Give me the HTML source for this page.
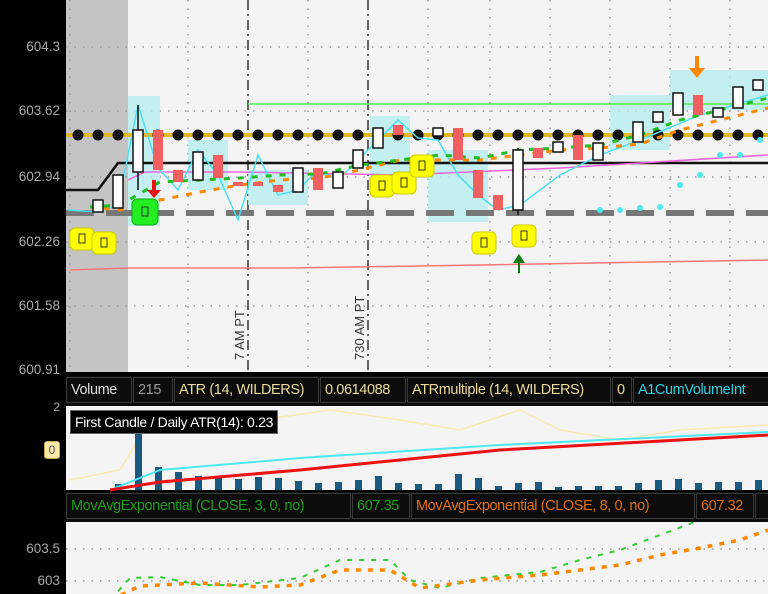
<!DOCTYPE html><html><head><style>
body{margin:0;width:768px;height:594px;overflow:hidden;background:#000;font-family:"Liberation Sans",sans-serif}
.lab{position:absolute;color:#aaa;font-size:13.5px;text-align:right;width:60px}
.hdr{position:absolute;left:66px;width:702px;height:30px;background:#0c0c0c;overflow:hidden}
.hdr div{position:absolute;top:1px;height:26px;border:1px solid #3a3a3a;box-sizing:border-box;padding:0 4px;line-height:25px;font-size:14.5px;letter-spacing:-0.4px;white-space:nowrap;overflow:hidden}
</style></head><body>
<div class="lab" style="top:39px;left:0">604.3</div>
<div class="lab" style="top:103px;left:0">603.62</div>
<div class="lab" style="top:169px;left:0">602.94</div>
<div class="lab" style="top:234px;left:0">602.26</div>
<div class="lab" style="top:298px;left:0">601.58</div>
<div class="lab" style="top:362px;left:0">600.91</div>
<div class="lab" style="top:400px;left:0;font-size:12px">2</div>
<div style="position:absolute;left:44px;top:441px;width:14px;height:16px;background:#fbe9a8;border:1px solid #c9a850;border-radius:3px;font-size:12px;text-align:center;color:#555;line-height:16px">0</div>
<div class="lab" style="top:541px;left:0">603.5</div>
<div class="lab" style="top:573px;left:0">603</div>
<svg style="position:absolute;left:0;top:0" width="768" height="594">
<rect x="66" y="0" width="702" height="372" fill="#f4f4f4"/>
<rect x="66" y="0" width="62" height="372" fill="#c4c4c4"/>
<g stroke="#999" stroke-width="1.5" stroke-dasharray="1.5 7">
<line x1="66" y1="47" x2="768" y2="47"/><line x1="66" y1="111" x2="768" y2="111"/><line x1="66" y1="177" x2="768" y2="177"/><line x1="66" y1="242" x2="768" y2="242"/><line x1="66" y1="306" x2="768" y2="306"/>
<line x1="70" y1="0" x2="70" y2="372"/><line x1="188" y1="0" x2="188" y2="372"/><line x1="308" y1="0" x2="308" y2="372"/><line x1="428" y1="0" x2="428" y2="372"/><line x1="490" y1="0" x2="490" y2="372"/><line x1="550" y1="0" x2="550" y2="372"/><line x1="610" y1="0" x2="610" y2="372"/><line x1="670" y1="0" x2="670" y2="372"/><line x1="730" y1="0" x2="730" y2="372"/>
</g>
<g stroke="#333" stroke-width="1.5" stroke-dasharray="10 4 2 4"><line x1="248" y1="0" x2="248" y2="372"/><line x1="368" y1="0" x2="368" y2="372"/></g>
<text transform="translate(244,360) rotate(-90)" font-size="13" fill="#333">7 AM PT</text>
<text transform="translate(364,360) rotate(-90)" font-size="13" fill="#333">730 AM PT</text>
<g fill="#b8eef0" opacity=".8"><rect x="128" y="96" width="32" height="130"/><rect x="188" y="140" width="40" height="50"/><rect x="370" y="116" width="40" height="60"/><rect x="428" y="150" width="60" height="72"/><rect x="610" y="95" width="60" height="55"/><rect x="670" y="70" width="98" height="40"/><rect x="248" y="170" width="60" height="35"/></g>
<line x1="248" y1="104" x2="768" y2="104" stroke="#5e5" stroke-width="1.5"/>
<polyline points="70,270 128,268 290,268 480,265 768,260" fill="none" stroke="#f77" stroke-width="1.5"/>
<line x1="66" y1="213" x2="768" y2="213" stroke="#777" stroke-width="6" stroke-dasharray="28 12"/>
<line x1="66" y1="135" x2="768" y2="135" stroke="#e3b71f" stroke-width="4"/>
<line x1="78" y1="135" x2="768" y2="135" stroke="#111" stroke-width="11" stroke-linecap="round" stroke-dasharray="0 20"/>
<polyline points="66,190 98,190 118,163 768,163" fill="none" stroke="#111" stroke-width="2.5"/>
<polyline points="128,180 145,172 240,172 400,175 560,168 768,155" fill="none" stroke="#e6d" stroke-width="1.5"/>
<polyline points="68,210 98,212 118,205 138,105 158,168 178,190 198,150 218,175 238,220 258,155 278,195 298,190 318,170 338,180 358,160 378,140 398,120 418,138 438,140 458,175 478,195 498,210 520,205 560,175 600,155 640,140 700,115 768,95" fill="none" stroke="#4de0f0" stroke-width="1.5"/>
<polyline points="90,207 120,210 160,200 200,192 240,185 280,180 320,178 360,170 400,160 440,160 480,160 520,155 560,150 600,148 640,144 680,130 720,120 768,108" fill="none" stroke="#f80" stroke-width="3" stroke-dasharray="6 8"/>
<polyline points="90,207 120,205 160,182 200,180 240,178 280,175 320,174 360,165 400,160 440,155 480,158 520,150 560,148 600,145 640,135 680,120 720,110 768,98" fill="none" stroke="#2b2" stroke-width="3" stroke-dasharray="6 8"/>
<g stroke="#111" stroke-width="1.5" fill="#fff">
<rect x="93" y="200" width="10" height="12"/><rect x="113" y="175" width="10" height="33"/><line x1="138" y1="105" x2="138" y2="190"/><rect x="133" y="130" width="10" height="42"/>
<rect x="193" y="152" width="10" height="28"/><rect x="293" y="168" width="10" height="24"/><rect x="333" y="172" width="10" height="16"/><rect x="353" y="150" width="10" height="18"/><rect x="373" y="128" width="10" height="20"/><rect x="433" y="128" width="10" height="8"/>
<line x1="518" y1="148" x2="518" y2="215"/><rect x="513" y="150" width="10" height="60"/><rect x="553" y="142" width="10" height="10"/><rect x="593" y="143" width="10" height="17"/><rect x="633" y="122" width="10" height="20"/><rect x="653" y="112" width="10" height="10"/><rect x="673" y="93" width="10" height="22"/><rect x="713" y="108" width="10" height="9"/><rect x="733" y="87" width="10" height="21"/><rect x="753" y="80" width="10" height="10"/>
</g>
<g fill="#f06060"><rect x="153" y="130" width="10" height="40"/><rect x="173" y="170" width="10" height="12"/><rect x="213" y="155" width="10" height="23"/><rect x="233" y="182" width="10" height="4"/><rect x="253" y="182" width="10" height="4"/><rect x="273" y="185" width="10" height="7"/><rect x="313" y="168" width="10" height="22"/><rect x="393" y="125" width="10" height="10"/><rect x="453" y="128" width="10" height="32"/><rect x="473" y="170" width="10" height="28"/><rect x="493" y="195" width="10" height="15"/><rect x="533" y="148" width="10" height="10"/><rect x="573" y="135" width="10" height="25"/><rect x="693" y="95" width="10" height="20"/></g>
<g fill="#4de8f0"><circle cx="600" cy="210" r="3"/><circle cx="620" cy="210" r="3"/><circle cx="640" cy="208" r="3"/><circle cx="660" cy="207" r="3"/><circle cx="680" cy="185" r="3"/><circle cx="700" cy="175" r="3"/><circle cx="720" cy="155" r="3"/><circle cx="740" cy="155" r="3"/><circle cx="760" cy="140" r="3"/></g>
<g fill="#ff0" stroke="#cc0" stroke-width="1"><rect x="70" y="228" width="24" height="22" rx="5"/><rect x="92" y="232" width="24" height="22" rx="5"/><rect x="370" y="175" width="24" height="22" rx="5"/><rect x="392" y="172" width="24" height="22" rx="5"/><rect x="410" y="155" width="24" height="22" rx="5"/><rect x="472" y="232" width="24" height="22" rx="5"/><rect x="512" y="225" width="24" height="22" rx="5"/></g>
<g fill="none" stroke="#333" stroke-width="1"><rect x="79" y="234" width="6" height="9"/><rect x="101" y="238" width="6" height="9"/><rect x="379" y="181" width="6" height="9"/><rect x="401" y="178" width="6" height="9"/><rect x="419" y="161" width="6" height="9"/><rect x="481" y="238" width="6" height="9"/><rect x="521" y="231" width="6" height="9"/></g>
<rect x="132" y="199" width="26" height="26" rx="5" fill="#2e2" stroke="#1a1"/>
<rect x="142" y="207" width="6" height="9" fill="none" stroke="#333"/>
<path d="M152 180v10h-5l7 8 7-8h-5v-10z" fill="#e11"/>
<path d="M695 56v12h-6l8 10 8-10h-6v-12z" fill="#f80"/>
<path d="M518 273v-10h-5l6-9 6 9h-5v10z" fill="#171"/>
<rect x="66" y="405" width="702" height="85" fill="#f4f4f4"/>
<polyline points="70,480 120,470 150,420 200,430 260,420 330,410 400,420 460,430 520,410 560,430 620,440 680,430 768,425" fill="none" stroke="#fbe8b0" stroke-width="1.5"/>
<g fill="#1a5a80"><rect x="115" y="484" width="7" height="6"/><rect x="135" y="420" width="7" height="70"/><rect x="155" y="467" width="7" height="23"/><rect x="175" y="472" width="7" height="18"/><rect x="195" y="476" width="7" height="14"/><rect x="215" y="476" width="7" height="14"/><rect x="235" y="479" width="7" height="11"/><rect x="255" y="477" width="7" height="13"/><rect x="275" y="478" width="7" height="12"/><rect x="295" y="481" width="7" height="9"/><rect x="315" y="483" width="7" height="7"/><rect x="335" y="482" width="7" height="8"/><rect x="355" y="480" width="7" height="10"/><rect x="375" y="476" width="7" height="14"/><rect x="395" y="483" width="7" height="7"/><rect x="415" y="484" width="7" height="6"/><rect x="435" y="484" width="7" height="6"/><rect x="455" y="474" width="7" height="16"/><rect x="475" y="478" width="7" height="12"/><rect x="495" y="486" width="7" height="4"/><rect x="515" y="483" width="7" height="7"/><rect x="535" y="482" width="7" height="8"/><rect x="555" y="487" width="7" height="3"/><rect x="575" y="486" width="7" height="4"/><rect x="595" y="486" width="7" height="4"/><rect x="615" y="486" width="7" height="4"/><rect x="635" y="483" width="7" height="7"/><rect x="655" y="480" width="7" height="10"/><rect x="675" y="479" width="7" height="11"/><rect x="695" y="483" width="7" height="7"/><rect x="715" y="482" width="7" height="8"/><rect x="735" y="482" width="7" height="8"/><rect x="755" y="480" width="7" height="10"/></g>
<polyline points="110,490 160,470 300,458 500,445 768,432" fill="none" stroke="#4de8f0" stroke-width="2"/>
<polyline points="110,490 160,482 300,470 500,450 768,435" fill="none" stroke="#e11" stroke-width="3"/>
<rect x="66" y="522" width="702" height="72" fill="#f4f4f4"/>
<g stroke="#999" stroke-width="1.5" stroke-dasharray="1.5 7"><line x1="66" y1="549" x2="768" y2="549"/><line x1="66" y1="581" x2="768" y2="581"/></g>
<polyline points="110,600 130,578 160,577 200,585 240,585 300,578 340,560 390,560 410,580 440,588 480,578 540,572 580,560 620,550 660,535 700,520 768,520" fill="none" stroke="#3c3" stroke-width="2" stroke-dasharray="5 7"/>
<polyline points="110,600 140,586 200,583 260,587 300,585 340,570 390,570 420,588 480,580 540,575 580,570 620,565 660,555 700,548 740,540 768,530" fill="none" stroke="#f80" stroke-width="3.5" stroke-dasharray="5 7"/>
</svg>
<div class="hdr" style="top:376px">
<div style="left:0;width:66px;color:#ddd">Volume</div>
<div style="left:67px;width:40px;color:#999">215</div>
<div style="left:108px;width:145px;color:#eadb9c">ATR (14, WILDERS)</div>
<div style="left:254px;width:86px;color:#eadb9c">0.0614088</div>
<div style="left:341px;width:204px;color:#eadb9c">ATRmultiple (14, WILDERS)</div>
<div style="left:546px;width:20px;color:#eadb9c">0</div>
<div style="left:567px;width:160px;color:#2ccfe0">A1CumVolumeInt</div></div>
<div style="position:absolute;left:70px;top:410px;background:#000;color:#fff;font-size:14px;letter-spacing:-0.3px;padding:3px 4px;border:1px solid #666">First Candle / Daily ATR(14): 0.23</div>
<div class="hdr" style="top:492px">
<div style="left:0;width:285px;color:#1c9e1c">MovAvgExponential (CLOSE, 3, 0, no)</div>
<div style="left:286px;width:58px;color:#1c9e1c">607.35</div>
<div style="left:345px;width:284px;color:#e07010">MovAvgExponential (CLOSE, 8, 0, no)</div>
<div style="left:630px;width:58px;color:#e07010">607.32</div>
<div style="left:689px;width:30px"></div></div>
</body></html>
